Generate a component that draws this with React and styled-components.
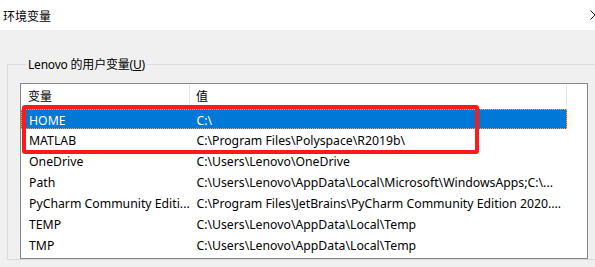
import React from "react";
import styled, { createGlobalStyle } from "styled-components";

const rows = [
  { name: "HOME", value: "C:\\" },
  { name: "MATLAB", value: "C:\\Program Files\\Polyspace\\R2019b\\" },
  { name: "OneDrive", value: "C:\\Users\\Lenovo\\OneDrive" },
  { name: "Path", value: "C:\\Users\\Lenovo\\AppData\\Local\\Microsoft\\WindowsApps;C:\\..." },
  { name: "PyCharm Community Editi...", value: "C:\\Program Files\\JetBrains\\PyCharm Community Edition 2020...." },
  { name: "TEMP", value: "C:\\Users\\Lenovo\\AppData\\Local\\Temp" },
  { name: "TMP", value: "C:\\Users\\Lenovo\\AppData\\Local\\Temp" },
];

function App() {
  return (
    <>
      <GlobalStyle />
      <Window>
        <TitleBar>
          <span>环境变量</span>
          <CloseBtn>
            <svg width="10" height="10" viewBox="0 0 10 10">
              <path d="M0.5 0.5 L9.5 9.5 M9.5 0.5 L0.5 9.5" stroke="#111" strokeWidth="1" fill="none" />
            </svg>
          </CloseBtn>
        </TitleBar>
        <Body>
          <GroupBox>
            <Legend>
              Lenovo 的用户变量(<u>U</u>)
            </Legend>
            <ListView>
              <HeaderRow>
                <HeadCell $w={169}>变量</HeadCell>
                <HeadCell $w={377}>值</HeadCell>
              </HeaderRow>
              {rows.map((r, i) => (
                <Row key={r.name} $selected={i === 0}>
                  <Cell $w={169} $pad={7}>{r.name}</Cell>
                  <Cell $w={377} $pad={6}>{r.value}</Cell>
                </Row>
              ))}
              <Highlight />
            </ListView>
          </GroupBox>
        </Body>
      </Window>
    </>
  );
}

const GlobalStyle = createGlobalStyle`
  html, body {
    margin: 0;
    padding: 0;
    background: #f0f0f0;
    overflow: hidden;
  }
  body {
    font-family: "Noto Sans", "Noto Sans CJK SC", sans-serif;
    font-size: 12px;
    color: #000;
  }
`;

const Window = styled.div`
  width: 595px;
  height: 267px;
  overflow: hidden;
  background: #f0f0f0;
`;

const TitleBar = styled.div`
  height: 30px;
  background: #fff;
  display: flex;
  align-items: center;
  justify-content: space-between;
  padding-left: 3px;
  font-size: 12px;
  font-family: "Noto Sans CJK SC", sans-serif;
  overflow: hidden;
`;

const CloseBtn = styled.div`
  width: 10px;
  height: 10px;
  margin-right: -5px;
  display: flex;
`;

const Body = styled.div`
  padding: 26px 0 0 7px;
`;

const GroupBox = styled.fieldset`
  margin: 0 -20px 0 0;
  padding: 10px 0 0 12px;
  border: 1px solid #dcdcdc;
  min-width: 0;
`;

const Legend = styled.legend`
  padding: 0 2px;
  margin-left: 6px;
  line-height: 17px;
  font-size: 12px;
  letter-spacing: -0.2px;
  font-family: "Noto Sans", "Noto Sans CJK SC", sans-serif;
  u {
    text-decoration-thickness: 1px;
  }
`;

const ListView = styled.div`
  position: relative;
  width: 566px;
  height: 174px;
  background: #fff;
  border: 1px solid #828790;
  overflow: hidden;
`;

const HeaderRow = styled.div`
  display: flex;
  height: 24px;
`;

const HeadCell = styled.div`
  width: ${(p) => p.$w}px;
  padding-left: ${(p) => (p.$w > 200 ? 6 : 7)}px;
  box-sizing: border-box;
  display: flex;
  align-items: center;
  border-right: 1px solid #e5e5e5;
  margin: 1px 0 2px;
  font-family: "Noto Sans CJK SC", sans-serif;
`;

const Row = styled.div`
  display: flex;
  width: 546px;
  box-sizing: border-box;
  align-items: center;
  font-size: 12.25px;
  background: ${(p) => (p.$selected ? "#0078d7" : "transparent")};
  color: ${(p) => (p.$selected ? "#fff" : "#000")};
  border: 1px dotted ${(p) => (p.$selected ? "#f5a55a" : "transparent")};
  margin-top: ${(p) => (p.$selected ? "1px" : "0")};
  height: ${(p) => (p.$selected ? "20px" : "21px")};
`;

const Cell = styled.div`
  width: ${(p) => p.$w}px;
  padding-left: ${(p) => p.$pad}px;
  padding-top: 2px;
  box-sizing: border-box;
  white-space: nowrap;
  overflow: hidden;
`;

const Highlight = styled.div`
  position: absolute;
  left: 1px;
  top: 21px;
  width: 457px;
  height: 49px;
  box-sizing: border-box;
  border: 4px solid #fe1a1a;
  border-radius: 3px;
  pointer-events: none;
`;

export default App;
